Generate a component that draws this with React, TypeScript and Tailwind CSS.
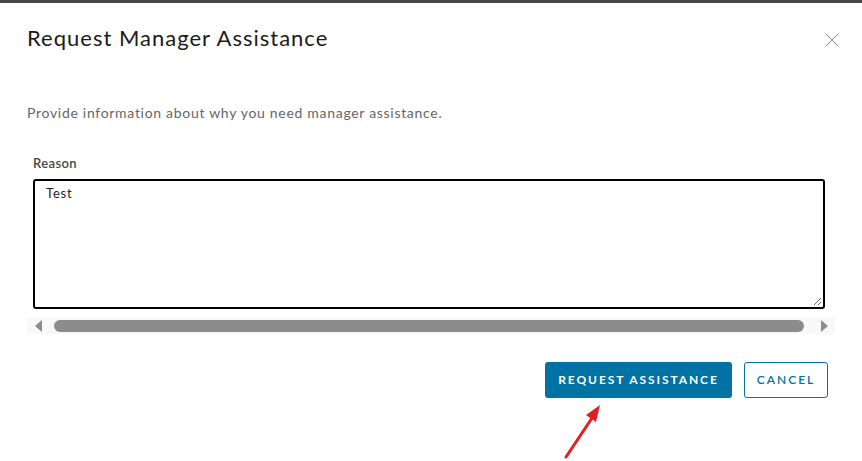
import { X } from 'lucide-react';

export default function App() {
  return (
    <div className="relative w-[862px] h-[461px] bg-white overflow-hidden font-['Lato',sans-serif]">
      {/* backdrop strip above the modal */}
      <div className="h-[3px] bg-[#474747]" />

      <div className="flex items-start justify-between pt-[21px] pl-[27px] pr-[18px]">
        <h3 className="text-[22px] leading-[28px] tracking-[1px] text-[#1b1b1b] font-normal">Request Manager Assistance</h3>
        <button className="mt-[4px] text-[#8a8a8a]">
          <X size={24} strokeWidth={1} />
        </button>
      </div>

      <div className="px-[27px]">
        <p className="mt-[51px] text-[14px] leading-[20px] tracking-[0.7px] text-[#666]">
          Provide information about why you need manager assistance.
        </p>

        <div className="mt-[32px] pl-[6px] pr-[10px]">
          <label className="block text-[13px] leading-[16px] tracking-[0.4px] font-semibold text-[#454545]">Reason</label>
          <div className="relative mt-[8px]">
            <textarea
              defaultValue="Test"
              className="block w-[792px] h-[130px] resize-none border-2 border-black rounded-[3px] px-[11px] py-[3px] text-[13px] leading-[18px] tracking-[0.8px] text-[#222] outline-none"
            />
            {/* resize grip */}
            <svg className="absolute right-[3px] bottom-[3px]" width="9" height="9" viewBox="0 0 9 9">
              <path d="M8 1 L1 8 M8 5 L5 8" stroke="#666" strokeWidth="1" />
            </svg>
          </div>
        </div>

        {/* horizontal scrollbar */}
        <div className="mt-[9px] flex items-center h-[16px] bg-[#f8f8f8] w-[808px]">
          <svg width="10" height="12" viewBox="0 0 10 12" className="ml-[6px]">
            <path d="M9 0 L2 6 L9 12 Z" fill="#8c8c8c" />
          </svg>
          <div className="ml-[11px] h-[12px] w-[750px] rounded-full bg-[#8c8c8c]" />
          <svg width="10" height="12" viewBox="0 0 10 12" className="ml-[16px]">
            <path d="M1 0 L8 6 L1 12 Z" fill="#8c8c8c" />
          </svg>
        </div>

        <div className="mt-[28px] flex justify-end gap-[12px] pr-[7px]">
          <button className="h-[36px] w-[187px] rounded-[3px] bg-[#0072a3] text-white text-[12px] font-bold tracking-[1.9px]">
            REQUEST ASSISTANCE
          </button>
          <button className="h-[36px] w-[84px] rounded-[3px] border border-[#0072a3] text-[#0072a3] text-[12px] font-semibold tracking-[2px]">
            CANCEL
          </button>
        </div>
      </div>

      {/* red pointer arrow */}
      <svg className="absolute left-[561px] top-[400px]" width="50" height="60" viewBox="0 0 50 60">
        <path d="M5 57 L33 15" stroke="#e02020" strokeWidth="3" strokeLinecap="round" />
        <path d="M39 5 L25 15 L35 22 Z" fill="#e02020" />
      </svg>
    </div>
  );
}
